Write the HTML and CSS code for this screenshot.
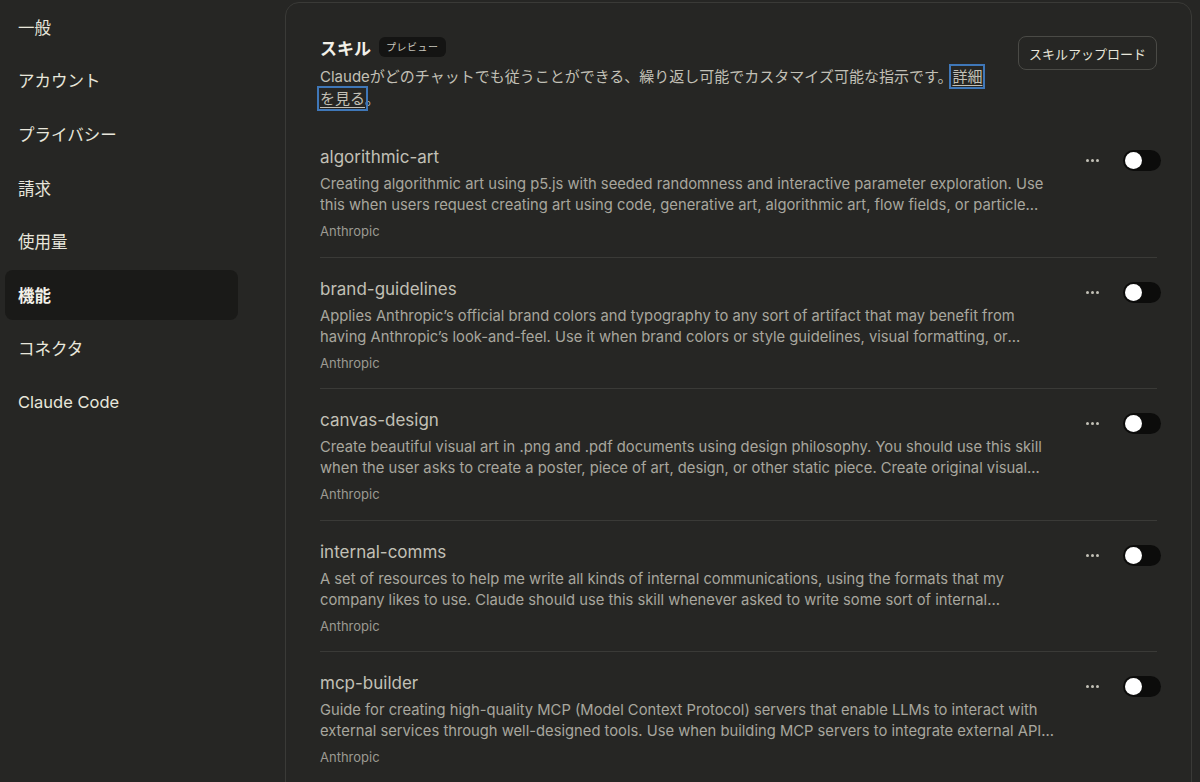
FILE: index.html
```html
<!DOCTYPE html>
<html lang="ja">
<head>
<meta charset="utf-8">
<title>設定 - 機能</title>
<link rel="stylesheet" href="styles.css">
</head>
<body>
<div class="app">
  <nav class="sidebar">
    <a class="nav-item">一般</a>
    <a class="nav-item">アカウント</a>
    <a class="nav-item">プライバシー</a>
    <a class="nav-item">請求</a>
    <a class="nav-item">使用量</a>
    <a class="nav-item active">機能</a>
    <a class="nav-item">コネクタ</a>
    <a class="nav-item">Claude Code</a>
  </nav>
  <main class="card">
    <header class="card-head">
      <div class="head-text">
        <div class="title-row">
          <h1 class="title">スキル</h1>
          <span class="badge">プレビュー</span>
        </div>
        <p class="intro">Claudeがどのチャットでも従うことができる、繰り返し可能でカスタマイズ可能な指示です。<a class="more">詳細を見る</a>。</p>
      </div>
      <button class="upload">スキルアップロード</button>
    </header>
    <ul class="skills">
      <li class="skill">
        <div class="skill-text">
          <div class="skill-name">algorithmic-art</div>
          <p class="skill-desc">Creating algorithmic art using p5.js with seeded randomness and interactive parameter exploration. Use this when users request creating art using code, generative art, algorithmic art, flow fields, or particle systems. Create original algorithmic art rather than copying existing artists' work.</p>
          <div class="skill-src">Anthropic</div>
        </div>
        <div class="skill-actions">
          <span class="dots"><i></i><i></i><i></i></span>
          <span class="toggle"><span class="knob"></span></span>
        </div>
      </li>
      <li class="skill">
        <div class="skill-text">
          <div class="skill-name">brand-guidelines</div>
          <p class="skill-desc">Applies Anthropic’s official brand colors and typography to any sort of artifact that may benefit from having Anthropic’s look-and-feel. Use it when brand colors or style guidelines, visual formatting, or company design standards apply.</p>
          <div class="skill-src">Anthropic</div>
        </div>
        <div class="skill-actions">
          <span class="dots"><i></i><i></i><i></i></span>
          <span class="toggle"><span class="knob"></span></span>
        </div>
      </li>
      <li class="skill">
        <div class="skill-text">
          <div class="skill-name">canvas-design</div>
          <p class="skill-desc">Create beautiful visual art in .png and .pdf documents using design philosophy. You should use this skill when the user asks to create a poster, piece of art, design, or other static piece. Create original visual designs, never copying existing artists' work.</p>
          <div class="skill-src">Anthropic</div>
        </div>
        <div class="skill-actions">
          <span class="dots"><i></i><i></i><i></i></span>
          <span class="toggle"><span class="knob"></span></span>
        </div>
      </li>
      <li class="skill">
        <div class="skill-text">
          <div class="skill-name">internal-comms</div>
          <p class="skill-desc">A set of resources to help me write all kinds of internal communications, using the formats that my company likes to use. Claude should use this skill whenever asked to write some sort of internal communications (status reports, leadership updates, newsletters).</p>
          <div class="skill-src">Anthropic</div>
        </div>
        <div class="skill-actions">
          <span class="dots"><i></i><i></i><i></i></span>
          <span class="toggle"><span class="knob"></span></span>
        </div>
      </li>
      <li class="skill">
        <div class="skill-text">
          <div class="skill-name">mcp-builder</div>
          <p class="skill-desc">Guide for creating high-quality MCP (Model Context Protocol) servers that enable LLMs to interact with external services through well-designed tools. Use when building MCP servers to integrate external API services, whether in Python or Node.</p>
          <div class="skill-src">Anthropic</div>
        </div>
        <div class="skill-actions">
          <span class="dots"><i></i><i></i><i></i></span>
          <span class="toggle"><span class="knob"></span></span>
        </div>
      </li>
    </ul>
  </main>
</div>
</body>
</html>
```
FILE: styles.css
```css
* { box-sizing: border-box; }
html, body {
  margin: 0;
  padding: 0;
  background: #262624;
  height: 100%;
  overflow: hidden;
}
body {
  font-family: Inter, "Noto Sans CJK JP", sans-serif;
  color: #e8e6dc;
}
.app {
  display: flex;
  align-items: flex-start;
  padding: 2px 8px 0 5px;
  gap: 47px;
}
.sidebar {
  width: 233px;
  flex: none;
  display: flex;
  flex-direction: column;
  gap: 4px;
}
.nav-item {
  display: flex;
  align-items: center;
  height: 49.6px;
  padding-left: 13px;
  font-size: 16.5px;
  color: #e8e6dc;
  border-radius: 8px;
  cursor: pointer;
}
.nav-item.active {
  background: #1a1a18;
  color: #f2f0e8;
  font-weight: 600;
}
.card {
  flex: none;
  width: 907px;
  min-height: 800px;
  border: 1px solid #3a3a37;
  border-radius: 14px;
  background: #262624;
  padding: 33px 34px 0 34px;
}
.card-head {
  display: flex;
  align-items: flex-start;
  gap: 24px;
}
.head-text { flex: 1; min-width: 0; }
.title-row {
  display: flex;
  align-items: center;
  gap: 8px;
  height: 22px;
}
.title {
  margin: 0;
  font-size: 17px;
  font-weight: 700;
  color: #f2f0e8;
}
.badge {
  font-size: 10px;
  color: #c8c6bd;
  background: #141413;
  border-radius: 6px;
  padding: 3px 7px;
  line-height: 14px;
  letter-spacing: 0.5px;
}
.intro {
  margin: 8px 0 0;
  font-size: 15px;
  line-height: 22px;
  color: #c2c0b6;
}
.more {
  color: #c2c0b6;
  text-decoration: underline;
  text-underline-offset: 3px;
  outline: 2px solid #3f77b8;
  outline-offset: 1px;
}
.upload {
  flex: none;
  width: 139px;
  height: 34px;
  border: 1px solid #4a4a46;
  border-radius: 8px;
  background: transparent;
  color: #e8e6dc;
  font-family: inherit;
  font-size: 13px;
  padding: 0;
}
.skills {
  list-style: none;
  margin: 16px 0 0;
  padding: 0;
}
.skill {
  display: flex;
  align-items: flex-start;
  gap: 22px;
  padding: 20px 0 16.5px;
  border-bottom: 1px solid #3a3a37;
}
.skill-text { flex: 1; min-width: 0; }
.skill-name {
  font-size: 17px;
  line-height: 22px;
  color: #c2c0b6;
  font-weight: 400;
}
.skill-desc {
  margin: 6px 0 0;
  font-size: 14.75px;
  line-height: 21px;
  color: #a8a69e;
  display: -webkit-box;
  -webkit-line-clamp: 2;
  -webkit-box-orient: vertical;
  overflow: hidden;
}
.skill-src {
  margin-top: 6px;
  font-size: 13px;
  line-height: 18px;
  color: #9c9a92;
}
.skill-actions {
  flex: none;
  width: 80px;
  display: flex;
  align-items: center;
  justify-content: space-between;
  margin-right: -4px;
  margin-top: 4px;
}
.dots {
  display: flex;
  gap: 2px;
  padding-left: 5px;
}
.dots i {
  width: 3px;
  height: 3px;
  border-radius: 50%;
  background: #c2c0b6;
}
.toggle {
  width: 38px;
  height: 21px;
  border-radius: 11px;
  background: #0c0c0b;
  display: flex;
  align-items: center;
  padding-left: 2px;
}
.knob {
  width: 17px;
  height: 17px;
  border-radius: 50%;
  background: #ffffff;
}
```
